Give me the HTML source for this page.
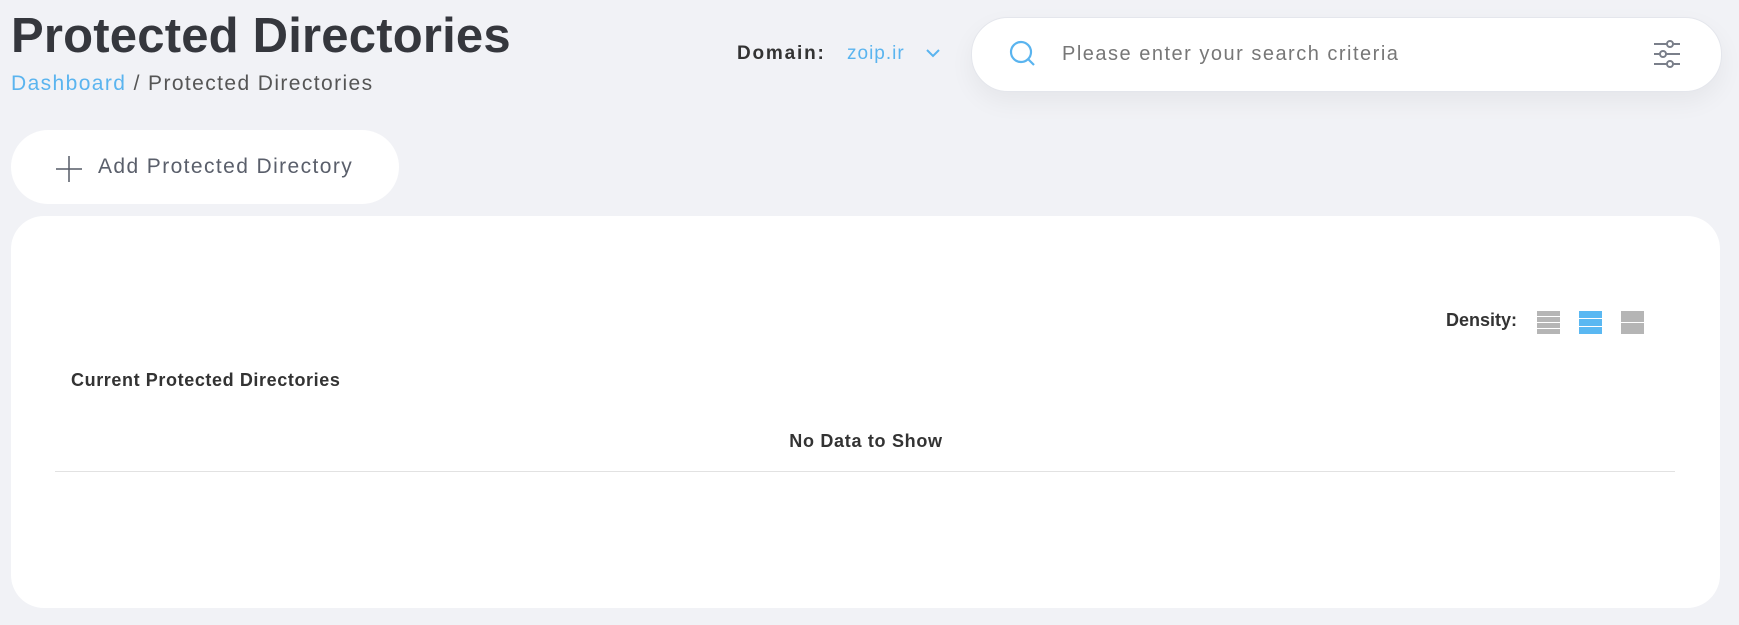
<!DOCTYPE html>
<html><head><style>
body{margin:0;width:1739px;height:625px;background:#f1f2f6;font-family:"Liberation Sans",sans-serif;position:relative;overflow:hidden;color:#333}
.a{position:absolute;white-space:nowrap}
</style></head><body>
<div class="a" style="left:11px;top:8px;font-size:49px;font-weight:bold;color:#35373d;letter-spacing:0.2px">Protected Directories</div>
<div class="a" style="left:11px;top:72px;font-size:21px;color:#555;letter-spacing:1.4px"><span style="color:#5ab4ef">Dashboard</span> / Protected Directories</div>
<div class="a" style="left:737px;top:43px;font-size:19px;font-weight:bold;color:#333;letter-spacing:1.8px">Domain:</div>
<div class="a" style="left:847px;top:43px;font-size:19px;color:#5ab4ef;letter-spacing:1px">zoip.ir</div>
<svg class="a" style="left:925px;top:47px" width="16" height="12" viewBox="0 0 16 12"><path d="M2 3l6 6 6-6" fill="none" stroke="#5ab4ef" stroke-width="2"/></svg>
<div class="a" style="left:971px;top:17px;width:749px;height:73px;background:#fff;border:1px solid #e4e6ec;border-radius:37px;box-shadow:0 10px 25px rgba(0,0,0,0.05)"></div>
<svg class="a" style="left:1009px;top:40px" width="28" height="28" viewBox="0 0 28 28"><circle cx="12" cy="12" r="10" fill="none" stroke="#5ab4ef" stroke-width="2.2"/><path d="M19 19l6 6" stroke="#5ab4ef" stroke-width="2.2"/></svg>
<div class="a" style="left:1062px;top:43px;font-size:20px;color:#777;letter-spacing:1.5px">Please enter your search criteria</div>
<svg class="a" style="left:1652px;top:38px" width="30" height="32" viewBox="0 0 30 32"><g stroke="#7a7f8a" stroke-width="2" fill="none"><path d="M2 6h26M2 16h26M2 26h26"/><circle cx="18" cy="6" r="3" fill="#fff"/><circle cx="11" cy="16" r="3" fill="#fff"/><circle cx="18" cy="26" r="3" fill="#fff"/></g></svg>
<div class="a" style="left:11px;top:130px;width:388px;height:74px;background:#fff;border-radius:37px"></div>
<svg class="a" style="left:55px;top:155px" width="28" height="28" viewBox="0 0 28 28"><path d="M14 1v26M1 14h26" stroke="#555a66" stroke-width="1.5"/></svg>
<div class="a" style="left:98px;top:155px;font-size:21px;color:#5a5f6b;letter-spacing:1.4px">Add Protected Directory</div>
<div class="a" style="left:11px;top:216px;width:1709px;height:392px;background:#fff;border-radius:33px"></div>
<div class="a" style="left:1446px;top:310px;font-size:18px;font-weight:bold;color:#333">Density:</div>
<svg class="a" style="left:1537px;top:311px" width="110" height="24" viewBox="0 0 110 24">
<g fill="#b5b5b5"><rect x="0" y="0" width="23" height="5"/><rect x="0" y="6" width="23" height="5"/><rect x="0" y="12" width="23" height="5"/><rect x="0" y="18" width="23" height="5"/></g>
<g fill="#5ab8f2"><rect x="42" y="0" width="23" height="7"/><rect x="42" y="8" width="23" height="7"/><rect x="42" y="16" width="23" height="7"/></g>
<g fill="#b5b5b5"><rect x="84" y="0" width="23" height="11"/><rect x="84" y="12" width="23" height="11"/></g></svg>
<div class="a" style="left:71px;top:370px;font-size:18px;font-weight:bold;color:#333;letter-spacing:0.6px">Current Protected Directories</div>
<div class="a" style="left:746px;top:431px;width:240px;text-align:center;font-size:18px;font-weight:bold;color:#333;letter-spacing:0.7px">No Data to Show</div>
<div class="a" style="left:55px;top:471px;width:1620px;height:1px;background:#e2e2e2"></div>
</body></html>
